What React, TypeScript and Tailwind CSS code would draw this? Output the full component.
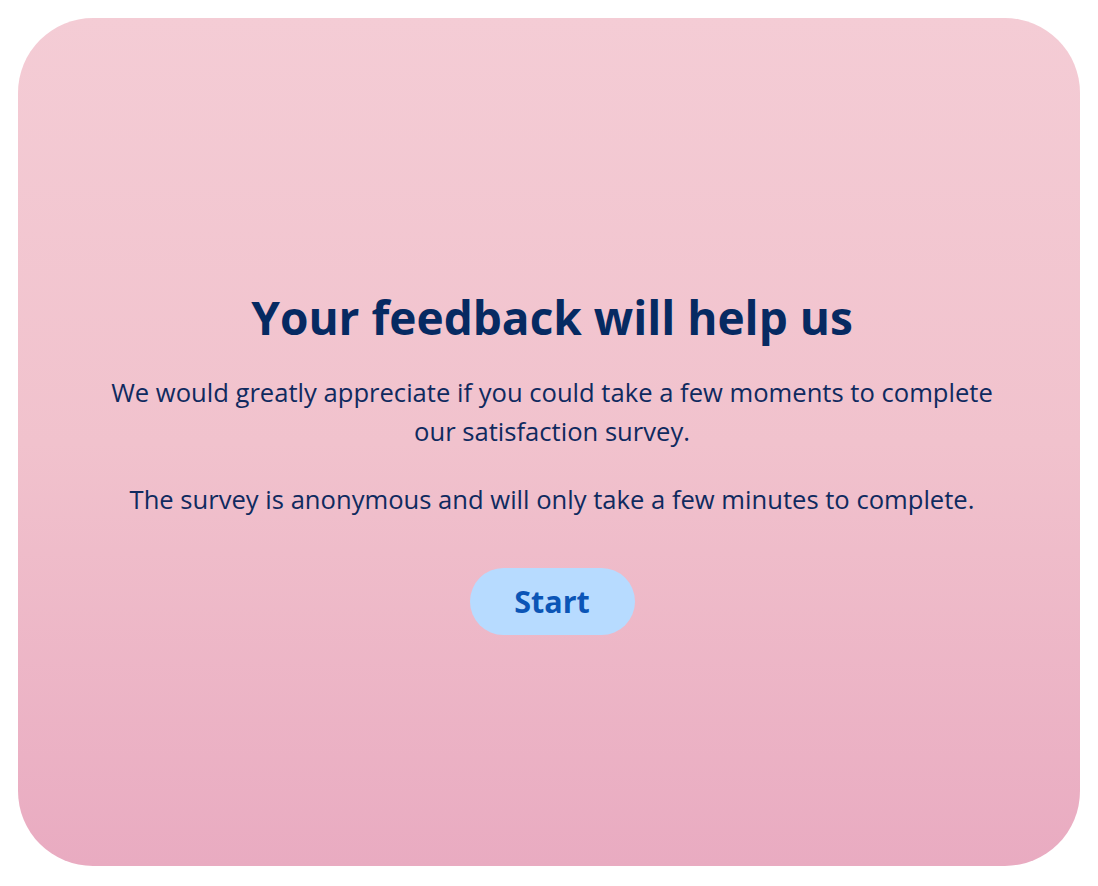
export default function App() {
  return (
    <div className="w-[1098px] h-[886px] bg-white p-[18px]" style={{ fontFamily: '"Open Sans", sans-serif' }}>
      <div className="h-[848px] w-[1062px] rounded-[75px] bg-gradient-to-b from-[#f4ccd5] via-[#f1c2cd] to-[#e9abc1] flex flex-col items-center pt-[268px] pl-[6px]">
        <h1 className="text-[46px] leading-[62px] font-bold text-[#062a62]">Your feedback will help us</h1>
        <p className="mt-[25px] max-w-[900px] text-center text-[25.6px] leading-[39px] text-[#0f2a5f]">
          We would greatly appreciate if you could take a few moments to complete our satisfaction survey.
        </p>
        <p className="mt-[29px] text-center text-[25.6px] leading-[39px] text-[#0f2a5f]">
          The survey is anonymous and will only take a few minutes to complete.
        </p>
        <button className="mt-[49px] w-[165px] h-[67px] rounded-full bg-[#b7dbff] text-[#0b55b6] text-[30.5px] font-bold flex items-center justify-center">
          Start
        </button>
      </div>
    </div>
  );
}
